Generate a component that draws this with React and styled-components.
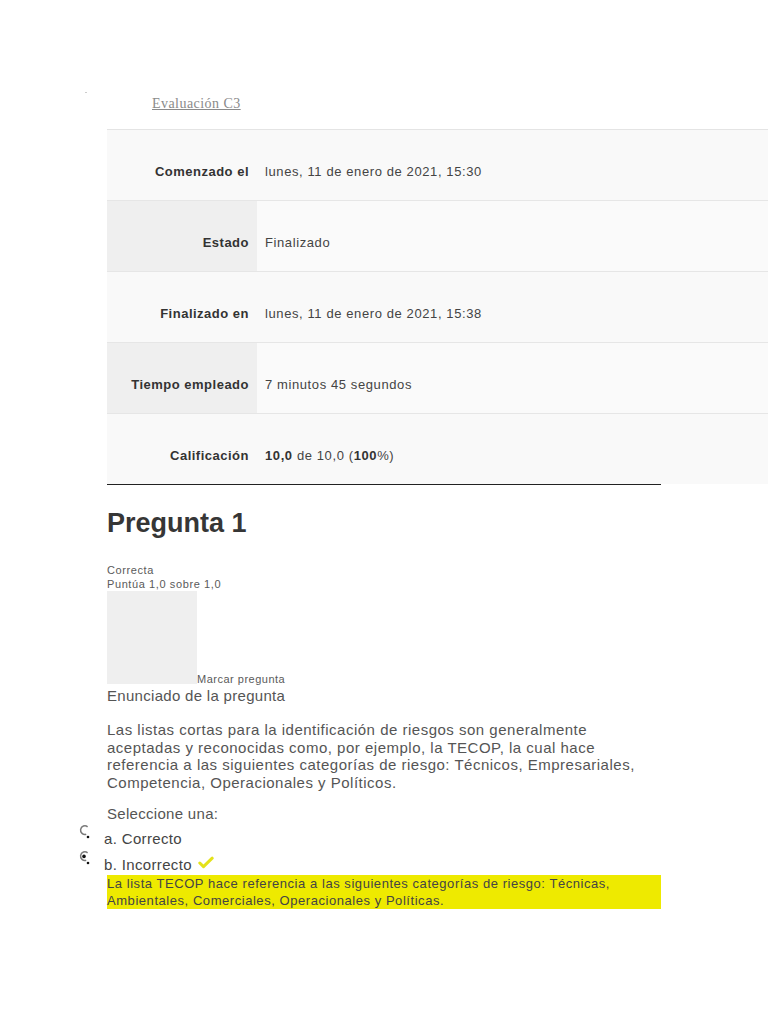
import React from "react";
import styled, { createGlobalStyle } from "styled-components";

const Global = createGlobalStyle`
  html, body { margin: 0; padding: 0; background: #fff; }
  body { font-family: "Liberation Sans", Arial, sans-serif; color: #333; }
`;

const Page = styled.div`
  width: 768px;
  overflow: hidden;
  padding: 90px 0 80px 107px;
  box-sizing: border-box;
  position: relative;
`;

const Speck = styled.span`
  position: absolute;
  left: 85px;
  top: 92px;
  width: 2px;
  height: 1px;
  background: #ccc;
`;

const Crumb = styled.a`
  display: block;
  margin-left: 45px;
  font-family: "Liberation Serif", "Times New Roman", serif;
  font-size: 14px;
  letter-spacing: 0.45px;
  color: #8a8a8a;
  text-decoration: underline;
  line-height: 28px;
  height: 39px;
`;

const Table = styled.div`
  width: 661px;
  display: flex;
  flex-direction: column;
  border-top: 1px solid #e4e4e4;
`;

const Row = styled.div`
  display: grid;
  grid-template-columns: 150px 1fr;
  height: 70px;
  background: #f9f9f9;
  border-bottom: ${(p) => (p.last ? "none" : "1px solid #e6e6e6")};
`;

const Label = styled.div`
  display: flex;
  align-items: center;
  justify-content: flex-end;
  padding: 12px 8px 0 0;
  background: ${(p) => (p.shade ? "#efefef" : "transparent")};
  font-weight: bold;
  font-size: 13px;
  letter-spacing: 0.5px;
  color: #333;
`;

const Value = styled.div`
  display: flex;
  align-items: center;
  padding: 12px 0 0 8px;
  font-size: 13px;
  letter-spacing: 0.6px;
  color: #444;
  background: ${(p) => (p.shade ? "#fafafa" : "transparent")};
`;

const Strong = styled.b`
  color: #333;
`;

const Rule = styled.div`
  width: 554px;
  height: 1px;
  background: #222;
`;

const Heading = styled.h2`
  margin: 22px 0 0;
  font-size: 27px;
  font-weight: bold;
  color: #363636;
  line-height: 32px;
`;

const Meta = styled.div`
  margin-top: 24px;
  font-size: 11px;
  letter-spacing: 0.6px;
  color: #5a5a5a;
  line-height: 14px;
`;

const FlagRow = styled.div`
  display: flex;
  align-items: flex-end;
`;

const FlagBox = styled.div`
  width: 90px;
  height: 93px;
  background: #efefef;
`;

const FlagText = styled.span`
  font-size: 11px;
  letter-spacing: 0.5px;
  color: #5a5a5a;
  line-height: 11px;
  margin-bottom: -1px;
`;

const Prompt = styled.div`
  font-size: 15px;
  letter-spacing: 0.3px;
  color: #555;
  line-height: 20px;
  margin-top: 2px;
`;

const Para = styled.p`
  margin: 15px 0 0;
  font-size: 15px;
  letter-spacing: 0.5px;
  line-height: 17.7px;
  color: #555;
  white-space: nowrap;
`;

const Select = styled.div`
  margin-top: 12px;
  font-size: 15px;
  letter-spacing: 0.3px;
  color: #555;
  line-height: 20px;
`;

const Option = styled.div`
  position: relative;
  margin-left: -3px;
  font-size: 15px;
  letter-spacing: 0.35px;
  color: #444;
  line-height: 20px;
  margin-top: ${(p) => p.gap}px;
  display: flex;
  align-items: center;
`;

const RadioMark = styled.svg`
  position: absolute;
  left: -27px;
  top: -7px;
`;

const Feedback = styled.div`
  width: 554px;
  background: #eeea00;
  font-size: 13px;
  letter-spacing: 0.55px;
  line-height: 17px;
  color: #444;
  white-space: nowrap;
`;

function Radio({ checked }) {
  return (
    <RadioMark width="16" height="20" viewBox="0 0 16 20">
      <path
        d="M10.6 4.8 A4.3 4.3 0 1 0 9.2 12.2"
        fill="none"
        stroke="#7a7a7a"
        strokeWidth="1.5"
      />
      <circle cx="11" cy="15" r="1.3" fill="#111" />
      {checked && <circle cx="7" cy="8.4" r="1.8" fill="#111" />}
    </RadioMark>
  );
}

const Check = () => (
  <svg width="16" height="13" viewBox="0 0 16 13" style={{ marginLeft: 6, marginTop: -4 }}>
    <path d="M1.8 7 L5.5 10.6 L14.2 2.2" fill="none" stroke="#e4e21a" strokeWidth="3" strokeLinecap="round" strokeLinejoin="round" />
  </svg>
);

const rows = [
  { label: "Comenzado el", value: "lunes, 11 de enero de 2021, 15:30" },
  { label: "Estado", value: "Finalizado", shade: true },
  { label: "Finalizado en", value: "lunes, 11 de enero de 2021, 15:38" },
  { label: "Tiempo empleado", value: "7 minutos 45 segundos", shade: true },
];

export default function App() {
  return (
    <>
      <Global />
      <Page>
        <Speck />
        <Crumb href="#">Evaluación C3</Crumb>
        <Table>
          {rows.map((r) => (
            <Row key={r.label}>
              <Label shade={r.shade}>{r.label}</Label>
              <Value shade={r.shade}>{r.value}</Value>
            </Row>
          ))}
          <Row last>
            <Label>Calificación</Label>
            <Value>
              <span>
                <Strong>10,0</Strong> de 10,0 (<Strong>100</Strong>%)
              </span>
            </Value>
          </Row>
        </Table>
        <Rule />
        <Heading>Pregunta 1</Heading>
        <Meta>
          Correcta
          <br />
          Puntúa 1,0 sobre 1,0
        </Meta>
        <FlagRow>
          <FlagBox />
          <FlagText>Marcar pregunta</FlagText>
        </FlagRow>
        <Prompt>Enunciado de la pregunta</Prompt>
        <Para>
          Las listas cortas para la identificación de riesgos son generalmente
          <br />
          aceptadas y reconocidas como, por ejemplo, la TECOP, la cual hace
          <br />
          referencia a las siguientes categorías de riesgo: Técnicos, Empresariales,
          <br />
          Competencia, Operacionales y Políticos.
        </Para>
        <Select>Seleccione una:</Select>
        <Option gap={5}>
          <Radio />
          a. Correcto
        </Option>
        <Option gap={6}>
          <Radio checked />
          b. Incorrecto
          <Check />
        </Option>
        <Feedback>
          La lista TECOP hace referencia a las siguientes categorías de riesgo: Técnicas,
          <br />
          Ambientales, Comerciales, Operacionales y Políticas.
        </Feedback>
      </Page>
    </>
  );
}
